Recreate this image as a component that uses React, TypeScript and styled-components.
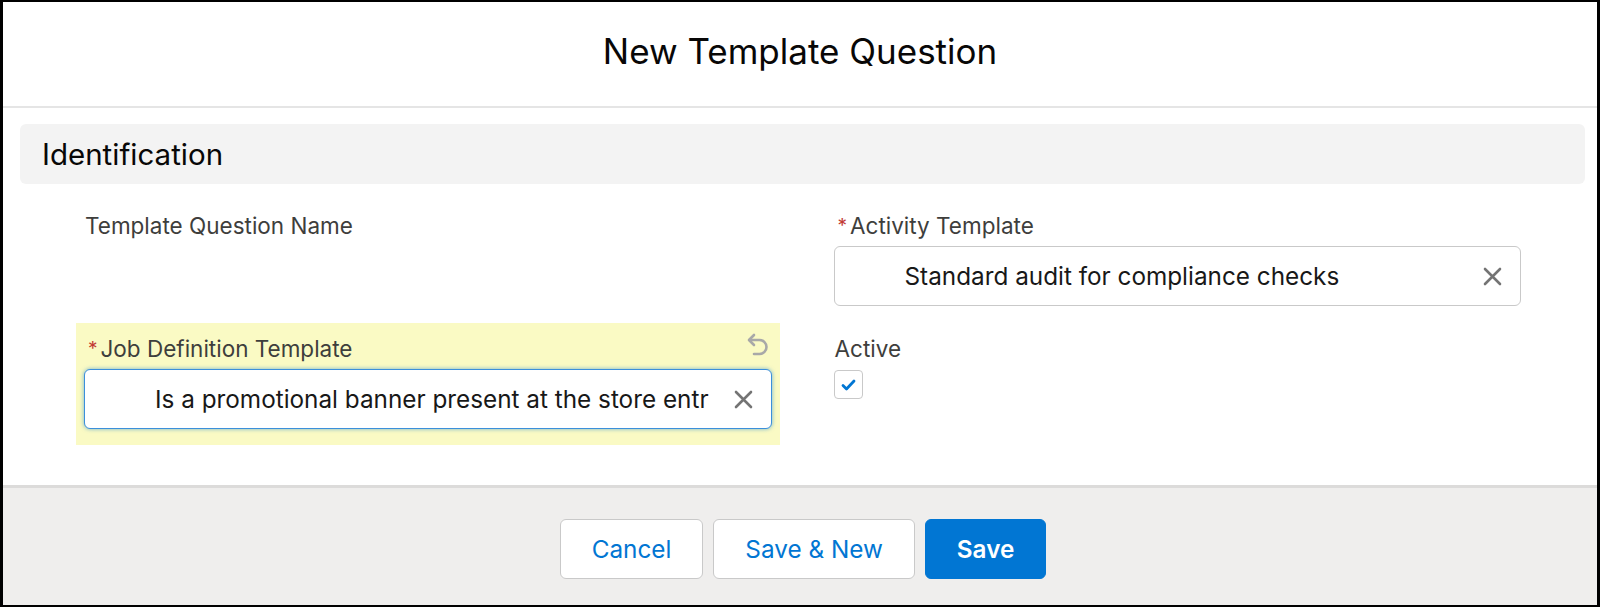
import React from 'react';
import styled, { createGlobalStyle } from 'styled-components';

const GlobalStyle = createGlobalStyle`
  html, body {
    margin: 0;
    padding: 0;
    background: #fff;
  }

  body {
    font-family: Inter, "Noto Sans", "Liberation Sans", sans-serif;
  }

  * {
    box-sizing: border-box;
  }
`;

const Frame = styled.div`
  width: 1600px;
  height: 607px;
  display: flex;
  flex-direction: column;
  border: solid #000;
  border-width: 2px 3px 2px 3px;
  background: #fff;
  overflow: hidden;
`;

const Header = styled.header`
  padding: 28px 0 34px;
  border-bottom: 2px solid #e5e5e5;
  text-align: center;
`;

const Title = styled.h1`
  margin: 0;
  font-size: 35px;
  line-height: 42px;
  font-weight: 400;
  color: #080707;
`;

const Body = styled.main`
  flex: 1;
  padding: 16px 12px 0 17px;
`;

const SectionHeader = styled.h2`
  margin: 0;
  height: 60px;
  display: flex;
  align-items: center;
  padding: 0 22px;
  background: #f3f3f3;
  border-radius: 6px;
  font-size: 29.5px;
  font-weight: 400;
  color: #080707;
`;

const FieldGrid = styled.div`
  display: grid;
  grid-template-columns: minmax(0, 1fr) minmax(0, 1fr);
  column-gap: 46px;
  row-gap: 1px;
  margin-top: 16px;
  padding: 0 56px;
`;

const Field = styled.div<{ $highlight?: boolean }>`
  position: relative;
  padding: 10px 8px 16px;
  background: ${(p) => (p.$highlight ? '#fafac4' : 'transparent')};
`;

const Label = styled.div`
  display: flex;
  align-items: center;
  height: 30px;
  padding-left: 1px;
  font-size: 22.5px;
  color: #3e3e3c;
`;

const Required = styled.abbr`
  margin: 0 3px 0 3px;
  color: #c23934;
  text-decoration: none;
  font-size: 19px;
`;

const UndoButton = styled.span`
  position: absolute;
  top: 10px;
  right: 10px;
  display: flex;
`;

const LookupInput = styled.div<{ $focused?: boolean }>`
  display: flex;
  align-items: center;
  height: 60px;
  margin-top: 6px;
  padding: 0 18px 0 70px;
  background: #fff;
  border: 1.5px solid ${(p) => (p.$focused ? '#3b8fdb' : '#c9c9c9')};
  border-radius: 6px;
  box-shadow: ${(p) => (p.$focused ? '0 0 4px rgba(1, 118, 211, 0.55)' : 'none')};
`;

const Value = styled.span`
  flex: 1;
  overflow: hidden;
  white-space: nowrap;
  font-size: 24.3px;
  color: #181818;
`;

const ClearIcon = styled.svg`
  flex-shrink: 0;
  margin-left: 25px;
`;

const Checkbox = styled.span`
  display: flex;
  align-items: center;
  justify-content: center;
  width: 29px;
  height: 29px;
  margin-top: 7px;
  background: #fff;
  border: 1.5px solid #c9c9c9;
  border-radius: 4px;
`;

const Footer = styled.footer`
  flex-shrink: 0;
  height: 120px;
  display: flex;
  justify-content: center;
  gap: 10px;
  padding-top: 31px;
  padding-left: 6px;
  background: #efeeed;
  border-top: 3px solid #dcdbda;
`;

const Button = styled.button<{ $primary?: boolean }>`
  height: 60px;
  padding: 0 31px;
  font-family: inherit;
  font-size: 24.3px;
  font-weight: ${(p) => (p.$primary ? 600 : 400)};
  color: ${(p) => (p.$primary ? '#fff' : '#0176d3')};
  background: ${(p) => (p.$primary ? '#0176d3' : '#fff')};
  border: 1.5px solid ${(p) => (p.$primary ? '#0176d3' : '#c9c9c9')};
  border-radius: 6px;
  cursor: pointer;
`;

const Clear = () => (
  <ClearIcon width="19" height="19" viewBox="0 0 19 19">
    <path d="M2 2 L17 17 M17 2 L2 17" stroke="#747474" strokeWidth="2.6" strokeLinecap="round" />
  </ClearIcon>
);

const Undo = () => (
  <svg width="25" height="24" viewBox="0 0 25 24" fill="none">
    <path d="M9 2 L4 7 L9 12" stroke="#a8a8a8" strokeWidth="2.6" strokeLinecap="round" strokeLinejoin="round" />
    <path d="M4.5 7 H14.5 a7 7 0 0 1 0 14 H9" stroke="#a8a8a8" strokeWidth="2.6" strokeLinecap="round" />
  </svg>
);

const App = () => {
  return (
    <>
      <GlobalStyle />
      <Frame>
        <Header>
          <Title>New Template Question</Title>
        </Header>

        <Body>
          <SectionHeader>Identification</SectionHeader>

          <FieldGrid>
            <Field>
              <Label>Template Question Name</Label>
            </Field>

            <Field>
              <Label>
                <Required title="required">*</Required>
                Activity Template
              </Label>
              <LookupInput>
                <Value>Standard audit for compliance checks</Value>
                <Clear />
              </LookupInput>
            </Field>

            <Field $highlight>
              <Label>
                <Required title="required">*</Required>
                Job Definition Template
              </Label>
              <UndoButton>
                <Undo />
              </UndoButton>
              <LookupInput $focused>
                <Value>Is a promotional banner present at the store entrance?</Value>
                <Clear />
              </LookupInput>
            </Field>

            <Field>
              <Label>Active</Label>
              <Checkbox>
                <svg width="15" height="12" viewBox="0 0 15 12">
                  <path d="M2 6.5 L5.5 10 L13 2" stroke="#0176d3" strokeWidth="2.8" fill="none" strokeLinecap="round" strokeLinejoin="round" />
                </svg>
              </Checkbox>
            </Field>
          </FieldGrid>
        </Body>

        <Footer>
          <Button>Cancel</Button>
          <Button>Save &amp; New</Button>
          <Button $primary>Save</Button>
        </Footer>
      </Frame>
    </>
  );
};

export default App;
